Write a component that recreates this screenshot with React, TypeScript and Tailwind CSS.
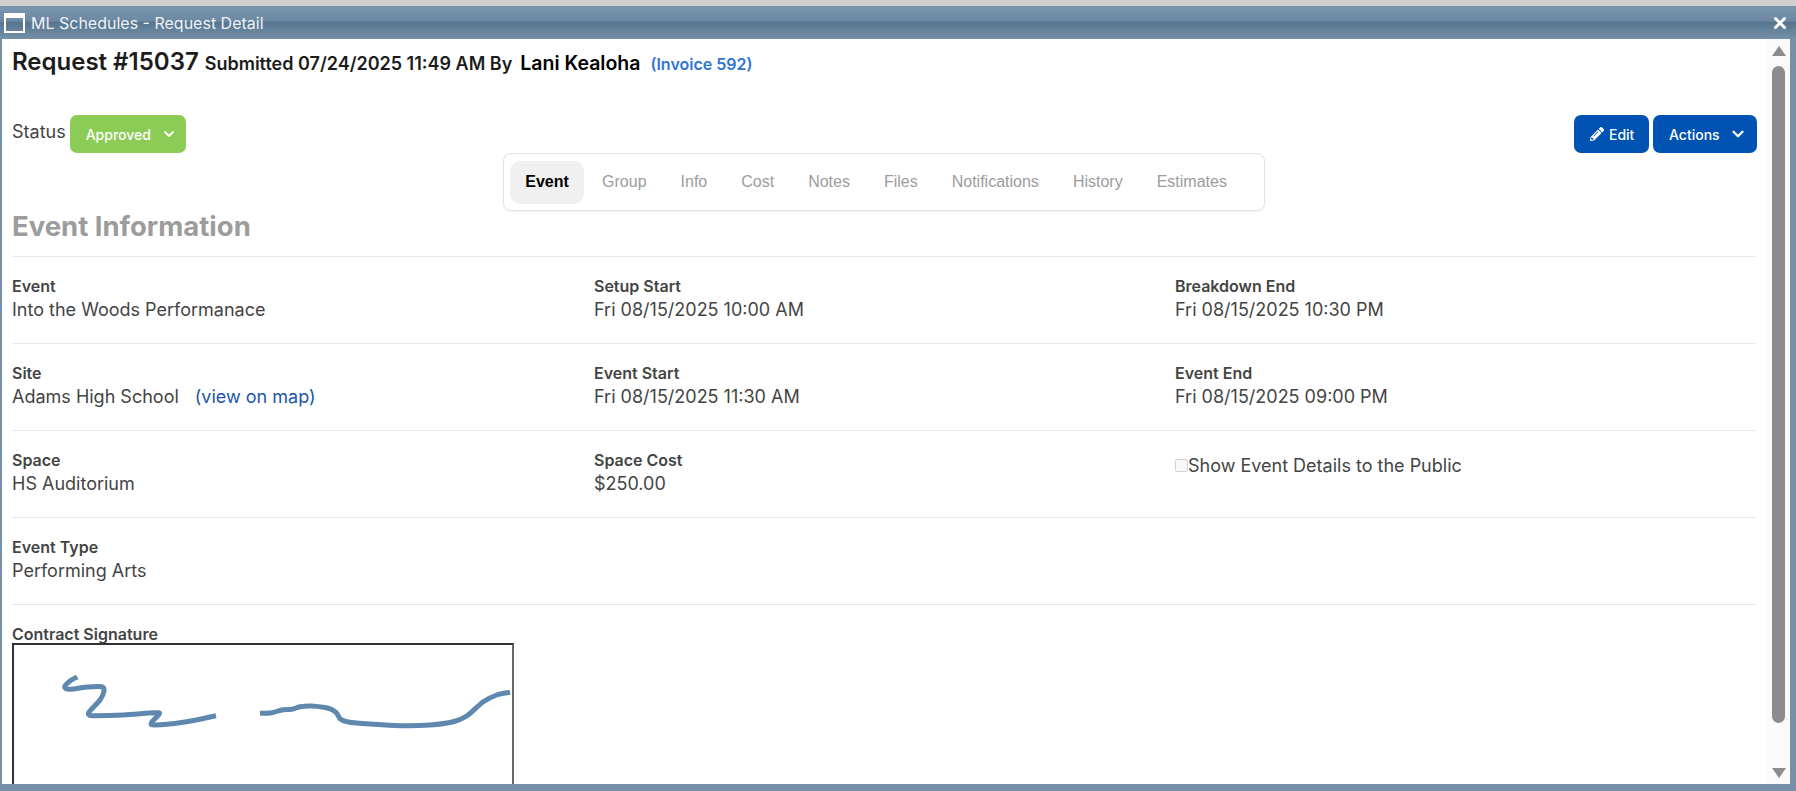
import React from "react";
import { ChevronDown, X } from "lucide-react";
import { FaPencilAlt } from "react-icons/fa";

const inter = "font-['Inter','Liberation_Sans',sans-serif]";

type Pt = [number, number];

function smooth(pts: Pt[]): string {
  let d = `M${pts[0][0]} ${pts[0][1]}`;
  for (let i = 0; i < pts.length - 1; i++) {
    const p0 = pts[Math.max(i - 1, 0)];
    const p1 = pts[i];
    const p2 = pts[i + 1];
    const p3 = pts[Math.min(i + 2, pts.length - 1)];
    const c1x = p1[0] + (p2[0] - p0[0]) / 6;
    const c1y = p1[1] + (p2[1] - p0[1]) / 6;
    const c2x = p2[0] - (p3[0] - p1[0]) / 6;
    const c2y = p2[1] - (p3[1] - p1[1]) / 6;
    d += `C${c1x.toFixed(1)} ${c1y.toFixed(1)} ${c2x.toFixed(1)} ${c2y.toFixed(1)} ${p2[0]} ${p2[1]}`;
  }
  return d;
}

const strokeA: Pt[] = [
  [77.3, 677], [70, 681], [64.7, 687], [70, 689.3], [86.7, 687], [101.7, 686.7], [104, 691],
  [100, 700], [89.3, 711.7], [89.3, 715], [95, 715.7], [123.3, 715], [155, 712.7], [159, 714.3],
  [151.7, 722.3], [155, 725], [183.3, 722.3], [216, 715.7],
];
const strokeB: Pt[] = [
  [260, 713.3], [271.7, 712.7], [281.7, 710], [291.7, 709.3], [300, 706.7], [311.7, 706],
  [328.3, 708.3], [336, 712.3], [340.7, 719.3], [348.3, 722], [370, 724], [400, 725.7], [430, 725],
  [453.3, 721.7], [466.7, 716], [483.3, 701.7], [496.7, 695], [510, 692.3],
];

const tabs = ["Group", "Info", "Cost", "Notes", "Files", "Notifications", "History", "Estimates"];

function Field({ label, children }: { label: string; children: React.ReactNode }) {
  return (
    <div>
      <div className="text-[16px] leading-6 font-semibold text-[#444444]">{label}</div>
      <div className="text-[18px] leading-6 text-[#444444]">{children}</div>
    </div>
  );
}

function Row({ children }: { children: React.ReactNode }) {
  return (
    <div className="grid h-[87px] grid-cols-[582px_581px_1fr] border-t border-[#e8e8e8] pt-[17px]">{children}</div>
  );
}

export default function App() {
  return (
    <div className={`flex h-[791px] w-[1796px] flex-col overflow-hidden bg-[#7590a8] ${inter}`}>
      <div className="h-[6px] shrink-0 bg-[#cfcfcf]" />
      <div className="flex h-[33px] shrink-0 items-center bg-[linear-gradient(180deg,#7b96af_0%,#6c88a2_46%,#56758f_49%,#7590a8_100%)] pl-1 pr-[7px] text-white">
        <div className="mr-[6px] h-5 w-[21px] border-2 border-white border-t-[5px]" />
        <span className="text-[16px] text-[#eef2f6]">ML Schedules - Request Detail</span>
        <X className="ml-auto h-[18px] w-[18px]" strokeWidth={4} />
      </div>
      <div className="ml-[2px] mr-[6px] mb-[7px] flex min-h-0 flex-1 bg-white">
        <main className="min-w-0 flex-1 overflow-hidden pl-[10px] pr-[11px]">
          <div className="flex h-[46px] items-baseline pt-[8px] text-[#1c1c1c]">
            <span className="text-[24px] leading-[30px] font-semibold">Request #15037</span>
            <span className="ml-[6px] text-[18px] font-semibold">Submitted 07/24/2025 11:49 AM By</span>
            <span className="ml-[8px] text-[19.5px] font-semibold text-black">Lani Kealoha</span>
            <span className="ml-[10px] text-[16px] font-semibold text-[#2f74d6]">(Invoice 592)</span>
          </div>
          <div className="mt-[30px] flex h-[38px] items-start justify-between">
            <div className="flex items-start">
              <span className="mt-[5px] text-[18px] leading-6 text-[#444444]">Status</span>
              <button className="ml-[4px] flex h-[38px] w-[116px] items-center rounded-[7px] bg-[#8ccb55] pl-4 text-[14px] font-medium text-white">
                Approved
                <ChevronDown className="ml-[10px] h-4 w-4" strokeWidth={3} />
              </button>
            </div>
            <div className="-mr-px flex gap-1">
              <button className="flex h-[38px] w-[75px] items-center pl-4 rounded-[7px] bg-[#0053b3] text-[14px] font-medium text-white">
                <FaPencilAlt className="mr-[5px] h-[14px] w-[14px]" />
                Edit
              </button>
              <button className="flex h-[38px] w-[104px] items-center pl-4 rounded-[7px] bg-[#0053b3] text-[14px] font-medium text-white">
                Actions
                <ChevronDown className="ml-[9px] h-[18px] w-[18px]" strokeWidth={3} />
              </button>
            </div>
          </div>
          <div className="flex justify-center">
            <nav className="flex h-[58px] items-center gap-[2px] rounded-lg border border-[#e2e2e2] pl-[6px] pr-[21px] font-['Liberation_Sans',Arial,sans-serif] text-[16px] shadow-[0_1px_2px_rgba(0,0,0,0.06)]">
              <span className="flex h-[43px] w-[74px] items-center justify-center rounded-[10px] bg-[#f0f0f0] font-bold text-black">Event</span>
              {tabs.map((t) => (
                <span key={t} className="flex h-[43px] items-center px-4 text-[#9c9c9c]">{t}</span>
              ))}
            </nav>
          </div>
          <h2 className="flex h-[45px] items-center pb-[14px] text-[27.5px] font-bold text-[#9c9c9c]">Event Information</h2>
          <Row>
            <Field label="Event">Into the Woods Performanace</Field>
            <Field label="Setup Start">Fri 08/15/2025 10:00 AM</Field>
            <Field label="Breakdown End">Fri 08/15/2025 10:30 PM</Field>
          </Row>
          <Row>
            <Field label="Site">
              Adams High School<a className="ml-4 text-[#1a56a8]">(view on map)</a>
            </Field>
            <Field label="Event Start">Fri 08/15/2025 11:30 AM</Field>
            <Field label="Event End">Fri 08/15/2025 09:00 PM</Field>
          </Row>
          <Row>
            <Field label="Space">HS Auditorium</Field>
            <Field label="Space Cost">$250.00</Field>
            <label className="mt-[5px] flex h-6 items-center text-[18px] text-[#444444]">
              <input type="checkbox" disabled className="m-0 h-[13px] w-[13px]" />
              Show Event Details to the Public
            </label>
          </Row>
          <Row>
            <Field label="Event Type">Performing Arts</Field>
            <div />
            <div />
          </Row>
          <div className="border-t border-[#e8e8e8] pt-[19px]">
            <div className="h-[19px] text-[16px] leading-5 font-semibold text-[#444444]">Contract Signature</div>
            <div className="h-[160px] w-[502px] border-2 border-[#333333] border-r-[#666666]">
              <svg viewBox="14 645 498 156" className="block h-[156px] w-[498px]" fill="none" stroke="#5f88ae" strokeWidth="5" strokeLinejoin="round">
                <path d={smooth(strokeA)} />
                <path d={smooth(strokeB)} />
              </svg>
            </div>
          </div>
        </main>
        <aside className="flex w-[23px] shrink-0 flex-col items-center bg-[#fafafa] pt-[7px] pb-[6px]">
          <svg viewBox="0 0 14 10" className="h-[10px] w-[14px] shrink-0" fill="#8c8c8c"><path d="M7 0 14 10H0Z" /></svg>
          <div className="mt-[10px] w-[13px] flex-1 rounded-full bg-[#8c8c8c]" />
          <svg viewBox="0 0 14 10" className="mt-[45px] h-[10px] w-[14px] shrink-0" fill="#8c8c8c"><path d="M0 0H14L7 10Z" /></svg>
        </aside>
      </div>
    </div>
  );
}
